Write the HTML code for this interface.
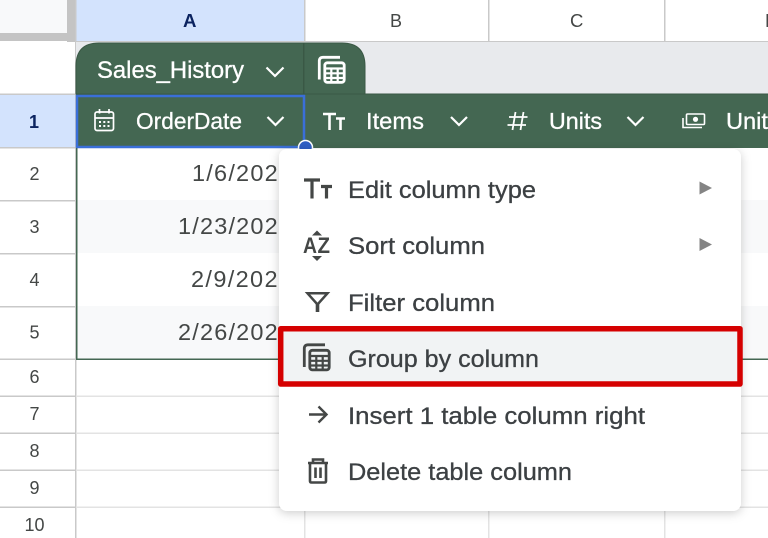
<!DOCTYPE html>
<html><head><meta charset="utf-8"><style>
html,body{margin:0;padding:0;background:#fff;width:768px;height:538px;overflow:hidden}
svg{display:block;filter:blur(.35px)}
text{font-family:"Liberation Sans",Arial,sans-serif}
.w{stroke:#fff;stroke-width:.3px}
.d{stroke:#3c4043;stroke-width:.3px}
</style></head><body>
<svg width="768" height="538" viewBox="0 0 768 538" xmlns="http://www.w3.org/2000/svg">
<defs>
<filter id="sh" x="-10%" y="-10%" width="120%" height="120%"><feDropShadow dx="0" dy="2" stdDeviation="5" flood-color="#000" flood-opacity=".2"/></filter>
<g id="calc" fill="none">
<path d="M22 1.300H5Q1.300 1.300 1.300 5V23.500" stroke-width="2.800"/>
<rect x="6.800" y="6.800" width="19.400" height="19.600" rx="2.500" stroke-width="2.800"/>
<path d="M7 12.500H26M7 17.300H26M7 22H26M13.300 12.500V26M19.700 12.500V26" stroke-width="2.200"/>
</g>
</defs>
<rect width="768" height="538" fill="#fff"/>

<!-- corner -->
<rect x="0" y="0" width="67" height="33" fill="#f8f9fa"/>
<rect x="67" y="0" width="8" height="42" fill="#c4c4c4"/>
<rect x="0" y="33" width="75" height="8" fill="#c4c4c4"/>

<!-- col headers -->
<rect x="76" y="0" width="228" height="41" fill="#d3e3fd"/>
<rect x="304" y="0" width="1.500" height="41" fill="#c9c9c9"/>
<rect x="488" y="0" width="1.500" height="41" fill="#c9c9c9"/>
<rect x="664" y="0" width="1.500" height="41" fill="#c9c9c9"/>
<rect x="75" y="41" width="693" height="1.500" fill="#c9c9c9"/>
<rect x="75" y="0" width="1.500" height="538" fill="#c9c9c9"/>
<text x="183" y="27" font-size="18.500" font-weight="700" fill="#0b2360" textLength="13.500" lengthAdjust="spacingAndGlyphs">A</text>
<text x="390" y="27" font-size="18.500" fill="#444746" textLength="12" lengthAdjust="spacingAndGlyphs">B</text>
<text x="570" y="27" font-size="18.500" fill="#444746">C</text>
<text x="765" y="27" font-size="18.500" fill="#444746">D</text>

<!-- table tab row -->
<rect x="76" y="42" width="692" height="52" fill="#e8eaed"/>
<path d="M76 94V66Q76 43 99 43H342Q365 43 365 66V94Z" fill="#446752" stroke="#3a5845" stroke-width="1"/>
<rect x="303" y="43" width="1.500" height="51" fill="#3a5845"/>
<text class="w" x="97" y="78" font-size="24" fill="#fff" textLength="147" lengthAdjust="spacingAndGlyphs">Sales_History</text>
<path d="M266.500 67.500L275 76L283.500 67.500" fill="none" stroke="#fff" stroke-width="2.200"/>
<use href="#calc" x="318" y="56" stroke="#fff"/>

<!-- header row -->
<rect x="0" y="94" width="75" height="53" fill="#d3e3fd"/>
<rect x="0" y="93.500" width="75" height="1.500" fill="#c9c9c9"/>
<rect x="0" y="147" width="75" height="1.500" fill="#c9c9c9"/>
<rect x="76" y="94" width="692" height="54" fill="#446752"/>
<rect x="76" y="93.500" width="692" height="1" fill="#3a5845"/>
<text x="29" y="128" font-size="18" font-weight="700" fill="#0b2360">1</text>
<rect x="77" y="96" width="227" height="51" fill="none" stroke="#3a6fd8" stroke-width="2.500"/>

<!-- calendar icon -->
<g fill="none" stroke="#fff" stroke-width="1.700">
<rect x="95" y="112" width="18.500" height="18.500" rx="2"/>
<path d="M95 118H113.500M99.500 109V113.500M109 109V113.500"/>
</g>
<g fill="#fff"><rect x="99" y="121" width="2" height="2"/><rect x="103.300" y="121" width="2" height="2"/><rect x="107.500" y="121" width="2" height="2"/><rect x="99" y="125" width="2" height="2"/><rect x="103.300" y="125" width="2" height="2"/><rect x="107.500" y="125" width="2" height="2"/></g>
<text class="w" x="136" y="129" font-size="23.500" fill="#fff" textLength="106" lengthAdjust="spacingAndGlyphs">OrderDate</text>
<path d="M267.500 117L275.500 125L283.500 117" fill="none" stroke="#fff" stroke-width="2.200"/>

<!-- Tt icon -->
<path d="M323 114H336M329.500 114V130M336 118.500H345M340.500 118.500V130" fill="none" stroke="#fff" stroke-width="2.600"/>
<text class="w" x="366" y="129" font-size="23.500" fill="#fff" textLength="58" lengthAdjust="spacingAndGlyphs">Items</text>
<path d="M451 117L459 125L467 117" fill="none" stroke="#fff" stroke-width="2.200"/>

<!-- hash -->
<path d="M512.500 130L515.500 112M520.500 130L523.500 112M509 117H527.500M507.500 125H526" fill="none" stroke="#fff" stroke-width="1.800"/>
<text class="w" x="549" y="129" font-size="23.500" fill="#fff" textLength="53" lengthAdjust="spacingAndGlyphs">Units</text>
<path d="M627.500 117L635.500 125L643.500 117" fill="none" stroke="#fff" stroke-width="2.200"/>

<!-- money -->
<g fill="none" stroke="#fff" stroke-width="1.600">
<rect x="686.500" y="114" width="18" height="10.500" rx="1"/>
<path d="M683 118V127.500H702"/>
</g>
<circle cx="695.500" cy="119.300" r="2.600" fill="#fff"/>
<text class="w" x="726" y="129" font-size="23.500" fill="#fff" textLength="42" lengthAdjust="spacingAndGlyphs">Unit</text>

<!-- data rows -->
<rect x="76" y="200" width="692" height="53" fill="#f8f9fa"/>
<rect x="76" y="306" width="692" height="53" fill="#f8f9fa"/>
<rect x="76" y="148" width="1.500" height="212" fill="#446752"/>
<rect x="76" y="358.500" width="692" height="1.500" fill="#446752"/>

<!-- row lines -->
<g fill="#c9c9c9">
<rect x="0" y="200" width="75" height="1.500"/><rect x="0" y="253" width="75" height="1.500"/><rect x="0" y="306" width="75" height="1.500"/><rect x="0" y="358.500" width="75" height="1.500"/>
<rect x="0" y="395.500" width="75" height="1.500"/><rect x="0" y="432.500" width="75" height="1.500"/><rect x="0" y="469.500" width="75" height="1.500"/><rect x="0" y="506.500" width="75" height="1.500"/>
</g>
<g fill="#e3e3e3">
<rect x="76" y="395.500" width="692" height="1.500"/><rect x="76" y="432.500" width="692" height="1.500"/><rect x="76" y="469.500" width="692" height="1.500"/><rect x="76" y="506.500" width="692" height="1.500"/>
<rect x="304" y="360" width="1.500" height="178"/><rect x="488" y="360" width="1.500" height="178"/><rect x="664" y="360" width="1.500" height="178"/>
</g>

<g font-size="18" fill="#444746" text-anchor="middle">
<text x="34.500" y="180">2</text><text x="34.500" y="233">3</text><text x="34.500" y="286">4</text><text x="34.500" y="338.500">5</text>
<text x="34.500" y="383">6</text><text x="34.500" y="420">7</text><text x="34.500" y="457">8</text><text x="34.500" y="494">9</text><text x="34.500" y="531">10</text>
</g>

<g font-size="23.500" fill="#444746">
<text x="192" y="181" textLength="100" lengthAdjust="spacing">1/6/2025</text>
<text x="178" y="234" textLength="114" lengthAdjust="spacing">1/23/2025</text>
<text x="191" y="287" textLength="101" lengthAdjust="spacing">2/9/2025</text>
<text x="178" y="340" textLength="114" lengthAdjust="spacing">2/26/2025</text>
</g>

<!-- handle -->
<circle cx="305.500" cy="147.500" r="7" fill="#2f5fc4" stroke="#fff" stroke-width="1.500"/>

<!-- menu -->
<rect x="279" y="149" width="462" height="362" rx="8" fill="#fff" filter="url(#sh)"/>
<rect x="280.700" y="328.700" width="459.300" height="55.300" fill="#f1f3f4"/>
<rect x="280.700" y="328.700" width="459.300" height="55.300" fill="none" stroke="#d50000" stroke-width="5.500" stroke-linejoin="round"/>

<g font-size="24" fill="#3c4043" class="d">
<text x="348" y="198" textLength="188" lengthAdjust="spacingAndGlyphs">Edit column type</text>
<text x="348" y="254" textLength="137" lengthAdjust="spacingAndGlyphs">Sort column</text>
<text x="348" y="311" textLength="147" lengthAdjust="spacingAndGlyphs">Filter column</text>
<text x="348" y="367" textLength="191" lengthAdjust="spacingAndGlyphs">Group by column</text>
<text x="348" y="424" textLength="297" lengthAdjust="spacingAndGlyphs">Insert 1 table column right</text>
<text x="348" y="480" textLength="224" lengthAdjust="spacingAndGlyphs">Delete table column</text>
</g>

<path d="M699.500 181.500L712 188L699.500 194.500Z" fill="#848484"/>
<path d="M699.500 238L712 244.500L699.500 251Z" fill="#848484"/>

<!-- Tt menu -->
<path d="M304 180H320M312 180V198.500M321 186.500H332M326.500 186.500V198.500" fill="none" stroke="#444746" stroke-width="3.200"/>
<!-- AZ: A and Z letters of the sort icon -->
<text x="303" y="253" font-size="22" font-weight="700" fill="#444746" textLength="14" lengthAdjust="spacingAndGlyphs">A</text>
<text x="317.500" y="253" font-size="22" font-weight="700" fill="#444746" textLength="12.500" lengthAdjust="spacingAndGlyphs">Z</text>
<path d="M312 235.500L317 230.500L322 235.500Z" fill="#444746"/>
<path d="M312 256L317 261L322 256Z" fill="#444746"/>
<!-- filter -->
<path d="M307.500 293.300H327.500L317.500 304.500Z" fill="none" stroke="#444746" stroke-width="2.500" stroke-linejoin="miter"/>
<path d="M317.500 303V312" fill="none" stroke="#444746" stroke-width="3.600"/>
<!-- group -->
<use href="#calc" x="303" y="343.500" stroke="#444746"/>
<!-- arrow -->
<path d="M309 414.500H326M318.500 406.500L326.500 414.500L318.500 422.500" fill="none" stroke="#444746" stroke-width="2.400"/>
<!-- trash -->
<g fill="none" stroke="#444746" stroke-width="2.600">
<path d="M308 463H328M313 463V459.500H323V463"/>
<path d="M310 463V481Q310 482.500 311.500 482.500H324.500Q326 482.500 326 481V463"/>
<path d="M315.500 467.500V478M320.500 467.500V478"/>
</g>
</svg>
</body></html>
